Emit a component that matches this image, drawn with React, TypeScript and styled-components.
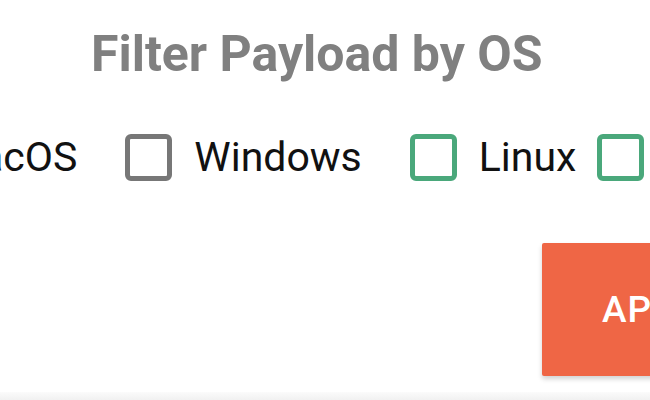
import React from 'react';
import styled, { createGlobalStyle } from 'styled-components';

const GlobalStyle = createGlobalStyle`
  html, body {
    margin: 0;
    padding: 0;
    background: #ffffff;
  }
  body {
    font-family: Roboto, 'Liberation Sans', sans-serif;
  }
`;

interface OsOption {
  name: string;
  variant: 'muted' | 'accent';
  spacing: number;
}

const options: OsOption[] = [
  { name: 'macOS', variant: 'muted', spacing: 48 },
  { name: 'Windows', variant: 'muted', spacing: 48 },
  { name: 'Linux', variant: 'accent', spacing: 21 },
  { name: 'Android', variant: 'accent', spacing: 21 },
];

const Page = styled.div`
  width: 650px;
  height: 400px;
  overflow: hidden;
  display: flex;
  flex-direction: column;
  background: #ffffff;
`;

const Title = styled.h2`
  margin: 26px 0 0 91px;
  font-family: Roboto, 'Liberation Sans', sans-serif;
  font-weight: 700;
  font-size: 50px;
  line-height: 56px;
  color: #808080;
  white-space: nowrap;
`;

const OptionRow = styled.div`
  display: flex;
  align-items: center;
  margin: 52px 0 0 -124px;
  white-space: nowrap;
`;

const Option = styled.label<{ $spacing: number }>`
  display: flex;
  align-items: center;
  gap: 22px;
  margin-right: ${p => p.$spacing}px;
  flex-shrink: 0;
  cursor: pointer;
`;

const Box = styled.span<{ $variant: 'muted' | 'accent' }>`
  box-sizing: border-box;
  width: 47px;
  height: 47px;
  border: 5px solid ${p => (p.$variant === 'accent' ? '#4aa87b' : '#777777')};
  border-radius: 6px;
  background: #ffffff;
  flex-shrink: 0;
`;

const Label = styled.span`
  font-family: Roboto, 'Liberation Sans', sans-serif;
  font-size: 41px;
  color: #111111;
  line-height: 47px;
`;

const Actions = styled.div`
  display: flex;
  margin: 62px 0 0 542px;
`;

const ApplyButton = styled.button`
  flex-shrink: 0;
  width: 220px;
  height: 133px;
  border: none;
  border-radius: 2px;
  background: #ef6645;
  color: #ffffff;
  font-family: Roboto, 'Liberation Sans', sans-serif;
  font-weight: 500;
  font-size: 37px;
  letter-spacing: 1px;
  text-align: left;
  padding: 0 0 0 60px;
  box-shadow: 0 3px 5px rgba(0, 0, 0, 0.18);
`;

const BottomShade = styled.div`
  margin-top: auto;
  height: 8px;
  background: linear-gradient(#fbfbfb, #f1f1f1);
`;

export default function App() {
  return (
    <>
      <GlobalStyle />
      <Page>
        <Title>Filter Payload by OS</Title>
        <OptionRow>
          {options.map(o => (
            <Option key={o.name} $spacing={o.spacing}>
              <Box $variant={o.variant} />
              <Label>{o.name}</Label>
            </Option>
          ))}
        </OptionRow>
        <Actions>
          <ApplyButton>APPLY</ApplyButton>
        </Actions>
        <BottomShade />
      </Page>
    </>
  );
}
